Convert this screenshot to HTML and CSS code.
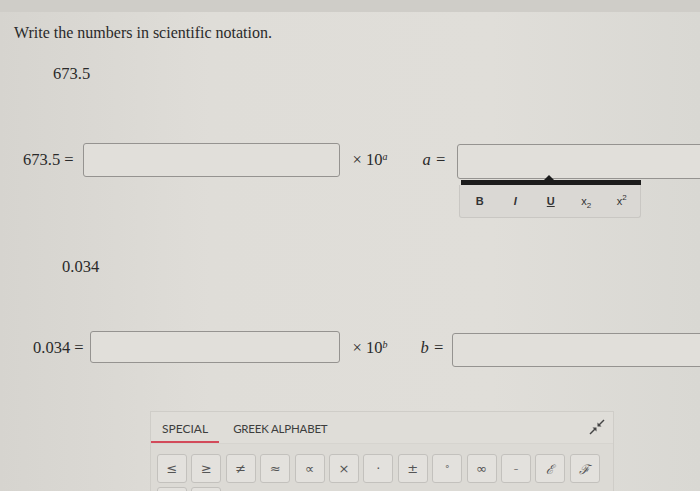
FILE: index.html
```html
<!DOCTYPE html>
<html>
<head>
<meta charset="utf-8">
<link rel="stylesheet" href="styles.css">
</head>
<body>
<div class="topband"></div>
<main class="page">
  <p class="title">Write the numbers in scientific notation.</p>
  <p class="given given-1">673.5</p>
  <div class="row row-1">
    <span class="lbl">673.5 =</span>
    <span class="box box-m1"></span>
    <span class="times">× 10<sup>a</sup></span>
    <span class="var">a =</span>
    <span class="box box-a">
      <span class="toolbar">
        <span class="tb-bar"></span>
        <span class="tb-caret"></span>
        <span class="tb-body">
          <span class="tb-btn tb-b">B</span>
          <span class="tb-btn tb-i">I</span>
          <span class="tb-btn tb-u">U</span>
          <span class="tb-btn">x<sub>2</sub></span>
          <span class="tb-btn">x<sup>2</sup></span>
        </span>
      </span>
    </span>
  </div>
  <p class="given given-2">0.034</p>
  <div class="row row-2">
    <span class="lbl">0.034 =</span>
    <span class="box box-m2"></span>
    <span class="times">× 10<sup>b</sup></span>
    <span class="var">b =</span>
    <span class="box box-b"></span>
  </div>
  <section class="palette">
    <div class="tabs">
      <span class="tab active">SPECIAL</span>
      <span class="tab">GREEK ALPHABET</span>
      <svg class="collapse" width="18" height="18" viewBox="0 0 18 18">
        <path d="M16 2 L10.5 7.5" stroke="#444" stroke-width="1.4"/>
        <path d="M9.5 4.5 L9.5 8.5 L13.5 8.5 Z" fill="#444"/>
        <path d="M2 16 L7.5 10.5" stroke="#444" stroke-width="1.4"/>
        <path d="M4.5 9.5 L8.5 9.5 L8.5 13.5 Z" fill="#444"/>
      </svg>
    </div>
    <div class="keys">
      <span class="key">≤</span>
      <span class="key">≥</span>
      <span class="key">≠</span>
      <span class="key">≈</span>
      <span class="key">∝</span>
      <span class="key">×</span>
      <span class="key">·</span>
      <span class="key">±</span>
      <span class="key small">°</span>
      <span class="key">∞</span>
      <span class="key small">–</span>
      <span class="key script">ℰ</span>
      <span class="key script">ℱ</span>
    </div>
    <div class="keys">
      <span class="key"></span>
      <span class="key"></span>
    </div>
  </section>
</main>
</body>
</html>
```
FILE: styles.css
```css
html, body {
  margin: 0;
  padding: 0;
}
body {
  width: 700px;
  height: 491px;
  overflow: hidden;
  background: linear-gradient(90deg, #d6d4cf 0%, #dfddd8 30%, #e0ded9 70%, #d9d8d3 100%);
  font-family: "Liberation Serif", "Times New Roman", serif;
  color: #2a2a2a;
}
.topband {
  height: 12px;
  background: #cfcdc8;
}
.page {
  position: relative;
  padding-top: 11px;
}
.title {
  margin: 0 0 0 14px;
  font-size: 16px;
  line-height: 20px;
}
.given {
  margin: 0;
  font-size: 16.5px;
  line-height: 20px;
}
.given-1 {
  margin: 21px 0 0 53px;
}
.given-2 {
  margin: 79px 0 0 62px;
}
.row {
  display: flex;
  align-items: center;
  font-size: 16.5px;
}
.row-1 {
  margin: 58px 0 0 23px;
  height: 36px;
}
.row-2 {
  margin: 53px 0 0 33px;
  height: 36px;
}
.lbl {
  white-space: nowrap;
  flex-shrink: 0;
}
.box {
  display: block;
  flex-shrink: 0;
  box-sizing: border-box;
  border: 1.5px solid #959390;
  border-radius: 3px;
  background: #e1dfda;
}
.box-m1 {
  width: 257px;
  height: 34px;
  margin-left: 9px;
}
.box-m2 {
  width: 250px;
  height: 32px;
  margin-left: 6px;
  margin-top: -2px;
}
.times {
  margin-left: 13px;
  white-space: nowrap;
  flex-shrink: 0;
}
.times sup {
  font-style: italic;
  font-size: 10px;
  vertical-align: 5px;
  line-height: 0;
}
.var {
  font-style: italic;
  white-space: nowrap;
  flex-shrink: 0;
}
.row-1 .var { margin-left: 35px; }
.row-2 .var { margin-left: 33px; }
.box-a {
  position: relative;
  width: 260px;
  height: 35px;
  margin-left: 11px;
  margin-top: 3px;
}
.box-b {
  width: 260px;
  height: 34px;
  margin-left: 8px;
  margin-top: 3px;
}
.toolbar {
  position: absolute;
  left: 1px;
  top: 35px;
  width: 182px;
}
.tb-bar {
  display: block;
  height: 5px;
  background: #1c1c1c;
  margin-left: 2px;
}
.tb-caret {
  position: absolute;
  left: 84px;
  top: -5px;
  width: 0;
  height: 0;
  border-left: 6px solid transparent;
  border-right: 6px solid transparent;
  border-bottom: 6px solid #1c1c1c;
}
.tb-body {
  display: flex;
  height: 33px;
  box-sizing: border-box;
  border: 1px solid #c9c7c3;
  border-top: none;
  border-radius: 0 0 3px 3px;
  background: #dad8d4;
  align-items: center;
  padding-left: 2px;
  font-family: "Liberation Sans", Arial, sans-serif;
  font-size: 11px;
  color: #333;
}
.tb-btn {
  width: 35.5px;
  text-align: center;
}
.tb-b { font-weight: bold; }
.tb-i { font-style: italic; font-weight: bold; }
.tb-u { text-decoration: underline; font-weight: bold; }
.tb-btn sub, .tb-btn sup {
  font-size: 8px;
  line-height: 0;
}
.palette {
  margin: 45px 0 0 150px;
  width: 464px;
  height: 81px;
  overflow: hidden;
  box-sizing: border-box;
  border: 1px solid #cfcdc8;
  border-bottom: none;
  background: #dfddd8;
}
.tabs {
  display: flex;
  align-items: center;
  height: 31px;
  position: relative;
  font-family: Lato, "Liberation Sans", sans-serif;
  font-size: 12px;
  color: #3d3d3d;
  border-bottom: 1px solid #d6d4cf;
}
.tab {
  padding: 0 12px;
  height: 31px;
  line-height: 33px;
  box-sizing: border-box;
}
.tab.active {
  border-bottom: 2px solid #d34a5a;
  padding: 0 11px 0 11px;
}
.tab + .tab {
  margin-left: 2px;
  font-size: 11.5px;
  letter-spacing: -0.2px;
}
.collapse {
  position: absolute;
  right: 7px;
  top: 6px;
}
.keys {
  display: flex;
  gap: 4.4px;
  padding: 10px 0 0 6px;
  background: #dcdad5;
}
.keys + .keys {
  padding-top: 4px;
}
.key {
  display: flex;
  flex-shrink: 0;
  align-items: center;
  justify-content: center;
  box-sizing: border-box;
  width: 30px;
  height: 29px;
  border: 1px solid #c3c1bd;
  border-radius: 3px;
  background: #e3e1dd;
  font-family: "DejaVu Sans", sans-serif;
  font-size: 13px;
  color: #555;
}
.key.small { font-size: 9px; }
.key.script {
  font-family: "DejaVu Serif", serif;
  font-style: italic;
  font-size: 13px;
}
```
